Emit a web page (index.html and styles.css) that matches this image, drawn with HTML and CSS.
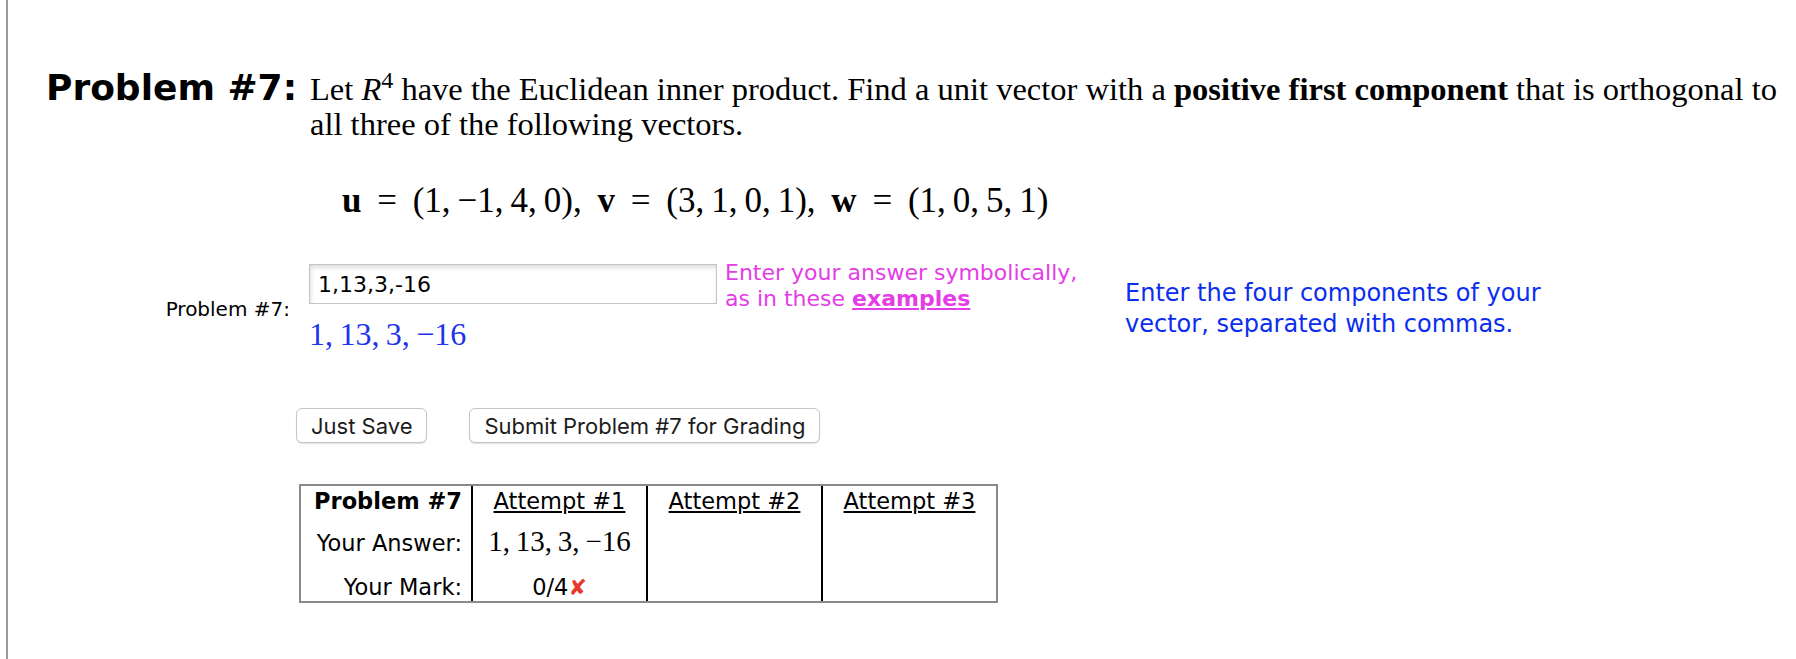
FILE: index.html
```html
<!DOCTYPE html>
<html lang="en">
<head>
    <meta charset="UTF-8">
    <title>Problem #7</title>
    <link rel="stylesheet" href="styles.css">
</head>
<body>
    <div class="frame">
        <div class="question">
            <div class="qnum">Problem #7:</div>
            <div class="qtext">
                Let <i>R</i><sup>4</sup> have the Euclidean inner product. Find a unit vector with a <b>positive first component</b> that is orthogonal to all three of the following vectors.
                <div class="vecs">
                    <b>u</b> = (1,&thinsp;&minus;1,&thinsp;4,&thinsp;0), <b>v</b> = (3,&thinsp;1,&thinsp;0,&thinsp;1), <b>w</b> = (1,&thinsp;0,&thinsp;5,&thinsp;1)
                </div>
            </div>
        </div>

        <div class="answer">
            <div class="alabel">Problem #7:</div>
            <div class="abox">
                <input type="text" value="1,13,3,-16">
                <div class="preview">1,&thinsp;13,&thinsp;3,&thinsp;&minus;16</div>
            </div>
            <div class="syntax">Enter your answer symbolically,<br>as in these <a href="#">examples</a></div>
            <div class="hint">Enter the four components of your<br>vector, separated with commas.</div>
        </div>

        <div class="actions">
            <button class="btn">Just Save</button>
            <button class="btn">Submit Problem #7 for Grading</button>
        </div>

        <table class="attempts">
            <tr class="head">
                <td class="lbl"><b>Problem #7</b></td>
                <td><a href="#">Attempt #1</a></td>
                <td><a href="#">Attempt #2</a></td>
                <td><a href="#">Attempt #3</a></td>
            </tr>
            <tr class="ans">
                <td class="lbl">Your Answer:</td>
                <td class="math">1,&thinsp;13,&thinsp;3,&thinsp;&minus;16</td>
                <td></td>
                <td></td>
            </tr>
            <tr class="mark">
                <td class="lbl">Your Mark:</td>
                <td>0/4<span class="wrong">&#x2718;</span></td>
                <td></td>
                <td></td>
            </tr>
        </table>
    </div>
</body>
</html>
```

FILE: styles.css
```css
body {
    margin: 0;
    font-family: "DejaVu Sans", Verdana, sans-serif;
    color: #000;
    background: #fff;
}
.frame {
    margin-left: 6px;
    border-left: 2px solid #9a9a9a; /* grey rule down the left */
    min-height: 100vh;
    box-sizing: border-box;
    padding-top: 68px;
}

/* question stem */
.question {
    display: flex;
    align-items: baseline;
}
.qnum {
    flex: 0 0 302px;
    box-sizing: border-box;
    padding-left: 38px;
    font-size: 36px;
    line-height: 40px;
    font-weight: bold;
    white-space: nowrap;
}
.qtext {
    flex: 1;
    padding-right: 10px;
    font-family: "Liberation Serif", "Times New Roman", serif;
    font-size: 32.5px;
    line-height: 35px;
}
.qtext sup {
    font-size: 24px;
    line-height: 0;
}
.vecs {
    margin: 40px 0 0 32px;
    font-size: 35px;
    line-height: 38px;
    word-spacing: 7px;
}

/* answer entry row */
.answer {
    display: flex;
    align-items: center;
    margin-top: 44px;
}
.alabel {
    flex: 0 0 282px;
    text-align: right;
    font-size: 20px;
    line-height: 24px;
}
.abox {
    margin-left: 19px;
    width: 408px;
}
.abox input {
    display: block;
    width: 408px;
    height: 40px;
    box-sizing: border-box;
    margin: 0;
    padding: 0 8px;
    border: 1px solid #c4c4c4;
    box-shadow: inset 1px 3px 4px rgba(0, 0, 0, 0.13);
    font-family: "DejaVu Sans", Verdana, sans-serif;
    font-size: 22px;
    color: #000;
    background: #fff;
}
.preview {
    margin-top: 10px;
    font-family: "Liberation Serif", "Times New Roman", serif;
    font-size: 32px;
    line-height: 40px;
    color: #2132ee;
}
.syntax {
    align-self: flex-start;
    margin-top: -4px;
    margin-left: 8px;
    width: 400px;
    font-size: 22px;
    line-height: 26px;
    color: #e43ce6;
}
.syntax a {
    color: inherit;
    font-weight: bold;
}
.hint {
    font-size: 24px;
    line-height: 31px;
    color: #0a2df0;
}

/* buttons */
.actions {
    display: flex;
    gap: 42px;
    margin: 54px 0 0 288px;
}
.btn {
    height: 35px;
    padding: 0 14px;
    border: 1px solid #c6c6c6;
    border-radius: 6px;
    background: #fff;
    box-shadow: 0 1px 1px rgba(0, 0, 0, 0.12);
    font-family: Inter, "Noto Sans", sans-serif;
    font-size: 22px;
    color: #1c1c1c;
}

/* attempts table */
.attempts {
    margin: 41px 0 0 291px;
    border: 2px solid #8a8a8a;
    border-spacing: 0;
    font-size: 22.5px;
}
.attempts td {
    box-sizing: border-box;
    width: 175px;
    padding: 0 4px;
    text-align: center;
    border-left: 2px solid #000;
    vertical-align: top;
    white-space: nowrap;
}
.attempts td.lbl {
    width: 170px;
    text-align: right;
    padding-right: 9px;
    border-left: none;
}
.attempts a {
    color: #000;
}
.head td {
    padding-top: 2px;
    padding-bottom: 2px;
    line-height: 26px;
}
.ans td {
    padding-top: 8px;
    padding-bottom: 14px;
    line-height: 34px;
    vertical-align: baseline;
}
.ans td.math {
    font-family: "Liberation Serif", "Times New Roman", serif;
    font-size: 29px;
}
.mark td {
    line-height: 26px;
}
.wrong {
    color: #e8382c;
    font-weight: bold;
    font-size: 22px;
}
```
